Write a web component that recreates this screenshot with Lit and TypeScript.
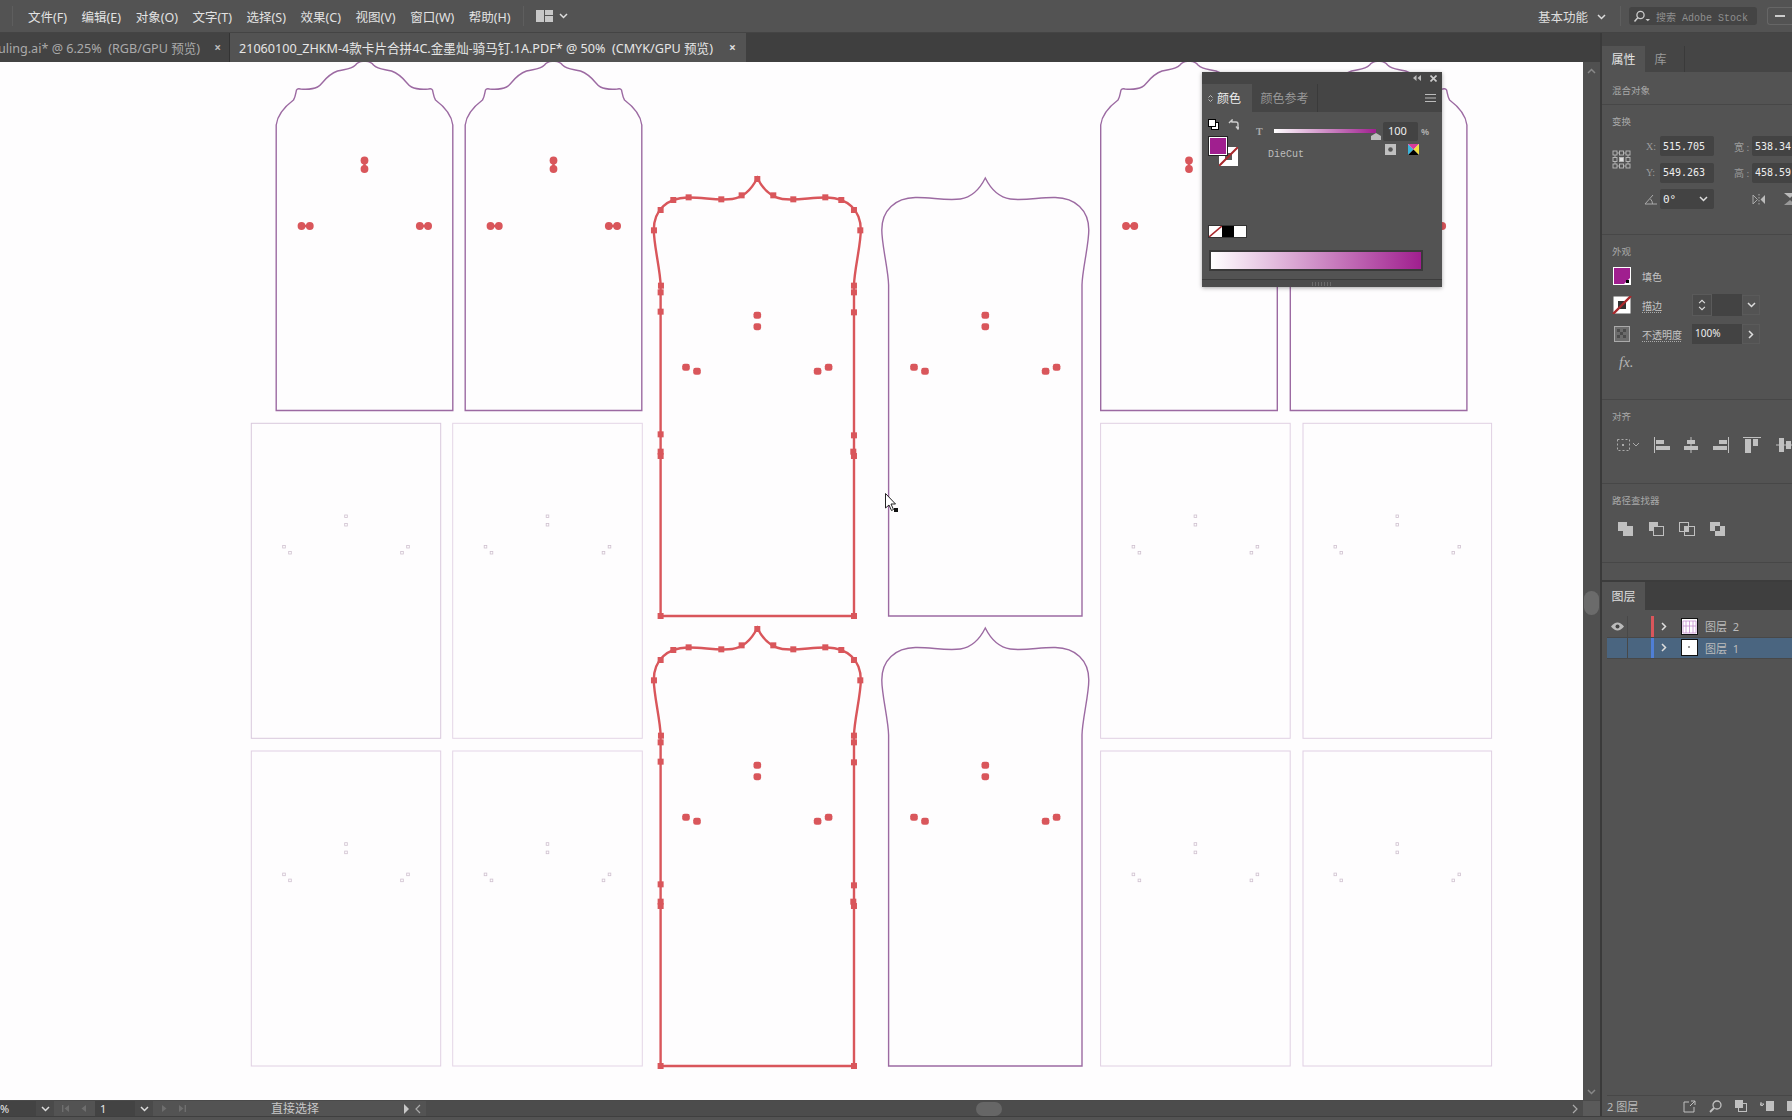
import { LitElement, html, css, svg } from "lit";
import { customElement } from "lit/decorators.js";

const RED = "#d9565b";
const PURPLE = "#9c6aa2";

const chev = (c = "#ddd") => html`<svg width="9" height="6" viewBox="0 0 9 6"><path d="M1 1l3.5 3.5L8 1" stroke=${c} fill="none" stroke-width="1.5"/></svg>`;

const domePath = "M-88.3 410.5V125C-87 114-79 106-71 100C-69 97-69 94-68 90Q-67 88-64 89C-58 89.5-52 89.5-47 87C-41 84-40 76-27 71C-20 69-14 70-9 65C-5 60 5 60 9 65C14 70 20 69 27 71C40 76 41 84 47 87C52 89.5 58 89.5 64 89Q67 88 68 90C69 94 69 97 71 100C79 106 87 114 88.3 125V410.5Z";
const flarePath = "M-96.7 616V285C-97 270-103.5 245-103.5 230C-103.5 210-90 198-70 197.5C-55 197-40 201-25 199C-15 197.5-6 190 0 178C6 190 15 197.5 25 199C40 201 55 197 70 197.5C90 198 103.5 210 103.5 230C103.5 245 97 270 96.7 285V616Z";

const domeHoles: [number, number][] = [[0, 160.5], [0, 169], [-63, 226], [-54.7, 226], [55.3, 226], [63.6, 226]];
const dome = (cx: number) => svg`<g transform="translate(${cx} 0)">
  <path d=${domePath} fill="none" stroke=${PURPLE} stroke-width="1.4"/>
  ${domeHoles.map(([x, y]) => svg`<circle cx=${x} cy=${y} r="3.9" fill=${RED}/>`)}
  <path d="M0 160.500V169M-63 226H-54.700M55.300 226H63.600" stroke=${RED} stroke-width="2.500"/>
</g>`;

const flareHoles: [number, number][] = [[0, 155.3], [0, 166.7], [-71.3, 207.3], [-60.3, 211.3], [60.3, 211.3], [71.3, 207.3]];
const flareNodes: [number, number][] = [
  [352, 57], [305, 106], [244, 118], [146, 112], [100, 120], [62, 150], [42, 211], [63, 377], [62, 397], [62, 455], [62, 823], [62, 875], [62, 888],
  [400, 106], [460, 118], [556, 112], [604, 120], [642, 150], [661, 211], [642, 377], [642, 397], [642, 457], [642, 826], [640, 875], [642, 888],
];

const flare = (cx: number, dy: number, selected: boolean) => svg`<g transform="translate(${cx} ${dy})">
  <path d=${flarePath} fill="none" stroke=${selected ? RED : PURPLE} stroke-width=${selected ? 2.4 : 1.4}/>
  ${flareHoles.map(([x, y]) => svg`<rect x=${x - 3.8} y=${y + 160 - 3.5} width="7.600" height="7" rx="2.400" fill=${RED}/>`)}
  ${selected
    ? svg`${flareNodes.map(([x, y]) => svg`<rect x=${(x - 352) / 3 - 3} y=${160 + y / 3 - 3} width="6" height="6" fill=${RED}/>`)}
      <rect x="-99.700" y="613" width="6" height="6" fill=${RED}/><rect x="93.700" y="613" width="6" height="6" fill=${RED}/>`
    : null}
</g>`;

const sheet = (x: number, y: number, w: number, c: string) => {
  const m = x + w / 2;
  const t = y - 423.3;
  const pts: [number, number][] = [[m, 516.3 + t], [m, 524.7 + t], [m - 62, 546.7 + t], [m - 56, 552.7 + t], [m + 56, 552.7 + t], [m + 62, 546.7 + t]];
  return svg`<rect x=${x} y=${y} width=${w} height="315" fill="none" stroke=${c} stroke-width="1"/>
    ${pts.map(([a, b]) => svg`<rect x=${a - 1.3} y=${b - 1.3} width="2.600" height="2.600" fill="none" stroke="#cfc0cf" stroke-width=".8"/>`)}`;
};

const menus = ["文件(F)", "编辑(E)", "对象(O)", "文字(T)", "选择(S)", "效果(C)", "视图(V)", "窗口(W)", "帮助(H)"];

@customElement("app-root")
export class AppRoot extends LitElement {
  static styles = css`
    :host { display: block; width: 1792px; height: 1120px; overflow: hidden; background: #535353; color: #d0d0d0;
      font-family: "Noto Sans", "Noto Sans CJK SC", sans-serif; font-size: 11px; }
    svg { display: block; flex: none; }
    .menubar { height: 33px; box-sizing: border-box; display: flex; align-items: center; background: #535353; border-bottom: 1px solid #444; position: relative; }
    .sep { width: 1px; height: 20px; background: #5e5e5e; flex: none; }
    .sep.first { margin-left: 12px; }
    .menus { display: flex; gap: 14.6px; margin-left: 15px; width: 495px; flex: none; }
    .menus span { font-size: 12.5px; color: #e2e2e2; flex: none; white-space: nowrap; }
    .layout-ico { margin-left: 12px; display: flex; align-items: center; gap: 6px; }
    .menu-space { flex: 1; }
    .workspace { font-size: 12.5px; color: #dedede; white-space: nowrap; }
    .wchev { margin: 2px 14px 0 9px; }
    .search { width: 128px; height: 18px; margin: 0 10px 0 8px; background: #444; border-radius: 3px; display: flex; align-items: center; padding-left: 4px; box-sizing: border-box; gap: 5px;
      font-family: "Liberation Mono", "Noto Sans CJK SC", monospace; font-size: 10px; color: #8f8f8f; white-space: nowrap; flex: none; }
    .minbtn { width: 25px; height: 18px; border: 1px solid #666; border-right: 0; border-radius: 3px 0 0 3px; box-sizing: border-box; flex: none; display: flex; align-items: center; justify-content: center; }
    .minbtn i { width: 10px; height: 2px; background: #ccc; }

    .body { display: flex; height: 1083px; }
    .left { width: 1600px; flex: none; display: flex; flex-direction: column; }
    .divider { width: 2px; background: #3a3a3a; flex: none; }
    .right { width: 190px; flex: none; display: flex; flex-direction: column; overflow: hidden; }

    .tabs { height: 29px; display: flex; background: #3f3f3f; flex: none; font-size: 12.6px; }
    .tab { display: flex; align-items: center; white-space: pre; position: relative; box-sizing: border-box; flex: none; overflow: hidden; }
    .tab.off { width: 230px; color: #aaa; justify-content: flex-end; padding-right: 8px; background: #434343; border-right: 1px solid #333; }
    .tab.on { width: 516px; background: #535353; color: #e6e6e6; padding-left: 9px; }
    .tab b { font-weight: 700; font-size: 12px; color: #ddd; }
    .tab.off b { margin-left: 14px; color: #bbb; }
    .tab.on b { margin-left: 16px; }

    .work { flex: 1; display: flex; min-height: 0; }
    .canvas { width: 1583px; flex: none; position: relative; overflow: hidden; background: #fefdfe; }
    .vscroll { width: 17px; flex: none; background: #505050; display: flex; flex-direction: column; align-items: center; }
    .vscroll .up { margin-top: 6px; transform: rotate(180deg); }
    .vscroll .thumb { width: 15px; height: 24px; border-radius: 8px; background: #6b6b6b; margin-top: 517px; }
    .vscroll .down { margin-top: auto; margin-bottom: 5px; }

    .status { height: 16px; flex: none; display: flex; align-items: center; background: #535353; border-top: 1px solid #4a4a4a; box-sizing: border-box; color: #bbb; }
    .field { background: #434343; height: 15px; display: flex; align-items: center; color: #e8e8e8; box-sizing: border-box; flex: none; font-size: 11px; }
    .sbox { width: 18px; height: 15px; background: #4a4a4a; display: flex; align-items: center; justify-content: center; flex: none; }
    .snav { width: 41px; flex: none; display: flex; justify-content: center; }
    .stool { width: 207px; flex: none; text-align: center; font-size: 12px; padding-right: 5px; box-sizing: border-box; color: #c8c8c8; line-height: 15px; white-space: nowrap; }
    .strack { flex: 1; display: flex; align-items: center; background: #4c4c4c; height: 15px; }
    .sthumb { width: 26px; height: 14px; border-radius: 7px; background: #666; margin-left: 550px; }
    .strack .rt { margin-left: auto; margin-right: 5px; }
    .scorner { width: 17px; height: 15px; background: #5a5a5a; flex: none; }

    .dock-strip { height: 13px; background: #454545; flex: none; }
    .ptabs { height: 26px; flex: none; background: #454545; display: flex; font-size: 12px; }
    .ptabs span { display: flex; align-items: center; justify-content: center; flex: none; }
    .ptabs .a { width: 43px; background: #535353; color: #e4e4e4; }
    .ptabs .b { width: 40px; color: #9a9a9a; border-right: 1px solid #3a3a3a; box-sizing: border-box; padding-right: 8px; }
    .sec { border-bottom: 1px solid #474747; padding-left: 10px; box-sizing: border-box; flex: none; }
    .ttl { font-size: 9.5px; line-height: 12px; color: #a9a9a9; white-space: nowrap; }
    .s-blend { height: 33px; padding-top: 13px; }
    .s-trans { height: 130px; padding-top: 11px; }
    .s-look { height: 165px; padding-top: 11px; }
    .s-align { height: 84px; padding-top: 11px; }
    .s-path { height: 79px; padding-top: 11px; }
    .s-gap { height: 17px; border-bottom: 2px solid #3c3c3c; flex: none; }
    .tgrid { display: grid; grid-template-columns: 20px 28px 54px 38px 70px; grid-template-rows: 20px 20px 20px; row-gap: 6.5px; margin-top: 8px; align-items: center; }
    .loc { grid-row: 1 / span 2; }
    .lab { color: #9c9c9c; font-size: 10px; padding-left: 14px; font-family: "Liberation Serif", "Noto Sans CJK SC", serif; white-space: nowrap; }
    .lab.cj { padding-left: 20px; font-size: 10px; }
    .num { height: 20px; background: #434343; border-radius: 2px; box-sizing: border-box; padding: 0 0 0 3px; display: flex; align-items: center; font-family: "DejaVu Sans Mono", monospace; font-size: 10px; color: #eee; white-space: nowrap; }
    .angle { grid-column: 3; display: flex; justify-content: space-between; align-items: center; padding-right: 6px; font-size: 11px; }
    .flips { grid-column: 5; display: flex; gap: 17px; align-items: center; }
    .lrow { display: flex; align-items: center; margin-top: 9px; }
    .lrow .cn { width: 50px; flex: none; color: #c4c4c4; font-size: 10px; white-space: nowrap; }
    .swat { width: 20px; flex: none; margin-right: 10px; }
    .under { text-decoration: underline dotted #aaa; text-underline-offset: 2px; }
    .spin { width: 20px; height: 22px; background: #4a4a4a; border: 1px solid #5a5a5a; box-sizing: border-box; display: flex; flex-direction: column; align-items: center; justify-content: center; gap: 2px; flex: none; }
    .blank { width: 30px; height: 22px; background: #434343; flex: none; }
    .box18 { width: 18px; height: 20px; border: 1px solid #5a5a5a; box-sizing: border-box; display: flex; align-items: center; justify-content: center; flex: none; }
    .pct { width: 50px; height: 20px; background: #434343; padding: 0 0 3px 3px; box-sizing: border-box; display: flex; align-items: center; color: #eee; font-size: 10px; flex: none; }
    .fx { font-family: "Liberation Serif", serif; font-style: italic; font-size: 15px; color: #b5b5b5; margin: 8px 0 0 7px; line-height: 20px; }
    .aligns { display: flex; align-items: center; margin: 14px 0 0 4px; gap: 14.5px; }
    .paths { display: flex; align-items: center; margin: 15px 0 0 6px; gap: 15px; }

    .ltabs { height: 28px; margin-top: 0; background: #3f3f3f; flex: none; display: flex; }
    .ltabs span { width: 43px; background: #535353; display: flex; align-items: center; justify-content: center; font-size: 12px; color: #ddd; }
    .layers { flex: 1; padding-top: 6px; min-height: 0; border-bottom: 1px solid #474747; margin-left: 5px; box-sizing: border-box; }
    .lay { height: 21.5px; display: flex; align-items: center; border-bottom: 1px solid #484848; box-sizing: border-box; }
    .lay.sel { background: #4a6580; }
    .lay .eye { width: 21px; height: 100%; border-right: 1px solid #484848; box-sizing: border-box; display: flex; align-items: center; justify-content: center; flex: none; }
    .lay .bar { width: 3px; height: 100%; margin-left: 23px; flex: none; }
    .lay .arr { margin-left: 7px; flex: none; }
    .lay .th { width: 17px; height: 17px; background: #fff; border: 1px solid #111; box-sizing: border-box; margin-left: 14px; flex: none; display: flex; align-items: center; justify-content: center; }
    .lay .nm { margin-left: 7px; font-size: 11px; color: #bcbcbc; white-space: pre; }
    .pfoot { height: 20px; flex: none; display: flex; align-items: center; padding-left: 5px; font-size: 11px; color: #bbb; gap: 0; }
    .pfoot .cnt { width: 76px; flex: none; white-space: nowrap; }
    .pfoot .ic { display: flex; gap: 13px; align-items: center; }
    .bottom { height: 4px; background: #535353; border-top: 1px solid #3f3f3f; box-sizing: border-box; }

    .cp { position: absolute; left: 1202px; top: 10px; width: 240px; height: 215px; background: #535353; box-shadow: 0 1px 4px rgba(0,0,0,.35); display: flex; flex-direction: column; }
    .cp-title { height: 12px; background: #454545; flex: none; display: flex; justify-content: flex-end; align-items: center; gap: 9px; padding-right: 5px; }
    .cp-tabs { height: 28px; flex: none; background: #454545; display: flex; font-size: 12px; }
    .cp-t1 { width: 50px; background: #535353; color: #eee; display: flex; align-items: center; gap: 4px; padding-left: 6px; box-sizing: border-box; }
    .cp-t2 { width: 66px; color: #999; border-right: 1px solid #3a3a3a; display: flex; align-items: center; justify-content: center; box-sizing: border-box; }
    .cp-menu { margin: 0 6px 0 auto; align-self: center; }
    .cp-main { flex: 1; display: flex; padding: 7px 0 0 6px; min-height: 0; }
    .cp-left { width: 51px; flex: none; }
    .stack { position: relative; width: 30px; height: 29px; margin: 7px 0 0 1px; }
    .fill { position: absolute; left: 0; top: 0; width: 18px; height: 18px; background: #a01f8f; border: 1px solid #fff; outline: 1px solid #222; box-sizing: border-box; z-index: 1; }
    .stroke { position: absolute; left: 10px; top: 10px; }
    .cp-row { display: flex; align-items: center; height: 20px; margin-top: 2px; }
    .cp-t { width: 15px; flex: none; font-family: "Liberation Serif", serif; font-size: 10px; color: #aaa; font-weight: 700; margin-left: -3px; padding-right: 3px; }
    .slider { position: relative; width: 102px; height: 4px; flex: none; background: linear-gradient(90deg, #fff, #a01f8f); margin-right: 7px; }
    .handle { position: absolute; right: -5px; top: 4px; }
    .cp-in { width: 35px; height: 19px; background: #434343; border-radius: 2px; flex: none; box-sizing: border-box; padding: 0 0 2px 5px; display: flex; align-items: center; color: #eee; font-size: 11px; }
    .cp-pct { margin-left: 3px; font-size: 9px; color: #aaa; font-weight: 700; }
    .cp-row2 { display: flex; align-items: flex-start; margin-top: 3px; }
    .diecut { font-family: "Liberation Mono", monospace; font-size: 10px; color: #bdbdbd; margin: 5px 0 0 9px; width: 117px; flex: none; }
    .cp-ic { display: flex; gap: 12px; }
    .cp-sw { display: flex; flex: none; margin: 0 0 0 6px; width: 39px; border: 1px solid #333; box-sizing: border-box; height: 13px; }
    .cp-sw i { flex: 1; display: block; }
    .grad { flex: none; height: 21px; margin: 12px 0 0 7px; width: 214px; box-sizing: border-box; border: 2px solid #3a3a3a; background: linear-gradient(90deg, #fff, #a01f8f); }
    .grip { flex: none; height: 7px; margin-top: 8px; background: #4c4c4c; border-top: 1px solid #3c3c3c; display: flex; align-items: center; justify-content: center; }
    .grip i { width: 20px; height: 4px; background: repeating-linear-gradient(90deg, #6a6a6a 0 1px, transparent 1px 3px); }
  `;

  render() {
    return html`
      <div class="menubar">
        <div class="sep first"></div>
        <div class="menus">${menus.map((m) => html`<span>${m}</span>`)}</div>
        <div class="sep"></div>
        <div class="layout-ico">
          <svg width="17" height="12" viewBox="0 0 17 12"><path d="M0 0h8v12H0zM9 0h8v5H9zM9 6h8v6H9z" fill="#c8c8c8"/></svg>
          ${chev()}
        </div>
        <div class="menu-space"></div>
        <span class="workspace">基本功能</span>
        <span class="wchev">${chev()}</span>
        <div class="sep"></div>
        <div class="search">
          <svg width="18" height="13" viewBox="0 0 18 13"><circle cx="7.500" cy="5" r="3.600" fill="none" stroke="#ccc" stroke-width="1.300"/><path d="M5 7.500L1.500 11.500" stroke="#ccc" stroke-width="1.500"/><path d="M12.500 9h4.500l-2.200 2.200z" fill="#ccc"/></svg>
          <span>搜索 Adobe Stock</span>
        </div>
        <div class="minbtn"><i></i></div>
      </div>

      <div class="body">
        <div class="left">
          <div class="tabs">
            <div class="tab off"><span>uling.ai* @ 6.25%  (RGB/GPU 预览)</span><b>×</b></div>
            <div class="tab on"><span>21060100_ZHKM-4款卡片合拼4C.金墨灿-骑马钉.1A.PDF* @ 50%  (CMYK/GPU 预览)</span><b>×</b></div>
          </div>
          <div class="work">
            <div class="canvas">
              ${this.artwork()}
              ${this.colorPanel()}
            </div>
            <div class="vscroll">
              <span class="up">${chev("#888")}</span>
              <div class="thumb"></div>
              <span class="down">${chev("#888")}</span>
            </div>
          </div>
          ${this.statusBar()}
        </div>
        <div class="divider"></div>
        <div class="right">${this.rightPanels()}</div>
      </div>
      <div class="bottom"></div>
    `;
  }

  artwork() {
    return html`<svg width="1583" height="1038" viewBox="0 62 1583 1038">
      ${dome(364.5)}${dome(553.5)}${dome(1189)}${dome(1378.6)}
      ${flare(757.3, 0, true)}${flare(757.3, 450, true)}
      ${flare(985.3, 0, false)}${flare(985.3, 450, false)}
      ${sheet(251.3, 423.3, 189.4, "#d9c8dd")}${sheet(452.7, 423.3, 189.6, "#e4d5e7")}
      ${sheet(251.3, 751, 189.4, "#e0d0e3")}${sheet(452.7, 751, 189.6, "#e4d5e7")}
      ${sheet(1100.6, 423.3, 189.6, "#e0d0e3")}${sheet(1303, 423.3, 188.6, "#e0d0e3")}
      ${sheet(1100.6, 751, 189.6, "#e0d0e3")}${sheet(1303, 751, 188.6, "#e0d0e3")}
      <path d="M885.500 493.500V508l3.500-3 2.500 5.500 2-1-2.500-5.500h4.500z" fill="#fff" stroke="#222" stroke-width="1"/>
      <rect x="894" y="508" width="4" height="4" fill="#111"/>
    </svg>`;
  }

  colorPanel() {
    return html`<div class="cp">
      <div class="cp-title">
        <svg width="8" height="6" viewBox="0 0 8 6"><path d="M3.500 0v6L0 3zM8 0v6L4.500 3z" fill="#bbb"/></svg>
        <svg width="7" height="7" viewBox="0 0 7 7"><path d="M.5.5l6 6M6.500.5l-6 6" stroke="#ccc" stroke-width="1.600"/></svg>
      </div>
      <div class="cp-tabs">
        <div class="cp-t1">
          <svg width="5" height="9" viewBox="0 0 5 9"><path d="M.5 3.500l2-2 2 2M.5 5.500l2 2 2-2" fill="none" stroke="#bbb"/></svg>
          <span>颜色</span>
        </div>
        <div class="cp-t2">颜色参考</div>
        <svg class="cp-menu" width="11" height="8" viewBox="0 0 11 8"><path d="M0 .5h11M0 4h11M0 7.500h11" stroke="#bbb"/></svg>
      </div>
      <div class="cp-main">
        <div class="cp-left">
          <div style="display:flex;gap:9px;align-items:center">
            <svg width="11" height="11" viewBox="0 0 11 11"><rect x="3.500" y="3.500" width="7" height="7" fill="#fff" stroke="#000"/><rect x=".5" y=".5" width="7" height="7" fill="#fff" stroke="#000"/></svg>
            <svg width="11" height="11" viewBox="0 0 11 11"><path d="M1 4l3-3v2h4q2 0 2 2v4M8 7.500l2 2.500 1-2" fill="none" stroke="#ccc" stroke-width="1.400"/></svg>
          </div>
          <div class="stack">
            <div class="fill"></div>
            <svg class="stroke" width="19" height="19" viewBox="0 0 19 19"><rect width="19" height="19" fill="#fff"/><rect x="6" y="6" width="7" height="7" fill="#5b5b5b"/><path d="M0 19L19 0" stroke="#a8282c" stroke-width="2"/></svg>
          </div>
        </div>
        <div>
          <div class="cp-row">
            <span class="cp-t">T</span>
            <div class="slider">
              <svg class="handle" width="10" height="7" viewBox="0 0 10 7"><path d="M5 0l5 3v4H0V3z" fill="#bdbdbd"/></svg>
            </div>
            <div class="cp-in">100</div>
            <span class="cp-pct">%</span>
          </div>
          <div class="cp-row2">
            <span class="diecut">DieCut</span>
            <div class="cp-ic">
              <svg width="11" height="11" viewBox="0 0 11 11"><rect width="11" height="11" fill="#c0c0c0"/><circle cx="5.500" cy="5.500" r="2.300" fill="#555"/></svg>
              <svg width="11" height="11" viewBox="0 0 11 11"><rect width="11" height="11" fill="#eee"/><path d="M0 0l5.500 5.500L0 11z" fill="#3ab4dc"/><path d="M0 0h11L5.500 5.500z" fill="#d83a9a"/><path d="M11 0v11L5.500 5.500z" fill="#f2df3c"/><path d="M0 11h11L5.500 5.500z" fill="#000"/></svg>
            </div>
          </div>
        </div>
      </div>
      <div class="cp-sw">
        <svg width="13" height="11" viewBox="0 0 13 11"><rect width="13" height="11" fill="#fff"/><path d="M0 11L13 0" stroke="#a8282c" stroke-width="1.600"/></svg>
        <i style="background:#000"></i><i style="background:#fff"></i>
      </div>
      <div class="grad"></div>
      <div class="grip"><i></i></div>
    </div>`;
  }

  statusBar() {
    const nav = (d: string) => html`<svg width="9" height="9" viewBox="0 0 9 9"><path d=${d} fill="#6e6e6e"/></svg>`;
    return html`<div class="status">
      <div class="field" style="width:36px">%</div>
      <div class="sbox">${chev()}</div>
      <div class="snav" style="gap:9px">${nav("M1 1h1.400v7H1zM8 1v7L3.500 4.500z")}${nav("M7 1v7L2.500 4.500z")}</div>
      <div class="field" style="width:40px;padding-left:5px">1</div>
      <div class="sbox">${chev()}</div>
      <div class="snav" style="gap:9px">${nav("M2 1v7l4.500-3.500z")}${nav("M1 1v7l4.500-3.500zM6.600 1H8v7H6.600z")}</div>
      <div class="stool">直接选择</div>
      <svg width="7" height="10" viewBox="0 0 7 10" style="margin-left:2px"><path d="M1 0v10l5-5z" fill="#c8c8c8"/></svg>
      <svg width="16" height="10" viewBox="0 0 16 10"><path d="M10 1L6 5l4 4" fill="none" stroke="#aaa" stroke-width="1.200"/></svg>
      <div class="strack">
        <div class="sthumb"></div>
        <svg class="rt" width="6" height="10" viewBox="0 0 6 10"><path d="M1 1l4 4-4 4" fill="none" stroke="#aaa" stroke-width="1.200"/></svg>
      </div>
      <div class="scorner"></div>
    </div>`;
  }

  rightPanels() {
    const g = "#c0c0c0";
    return html`
      <div class="dock-strip"></div>
      <div class="ptabs"><span class="a">属性</span><span class="b">库</span></div>
      <div class="sec s-blend"><div class="ttl">混合对象</div></div>

      <div class="sec s-trans">
        <div class="ttl">变换</div>
        <div class="tgrid">
          <svg class="loc" width="19" height="19" viewBox="0 0 19 19">
            ${[1, 7.5, 14].flatMap((y) => [1, 7.5, 14].map((x) => svg`<rect x=${x} y=${y} width="4" height="4" fill=${x === 7.5 && y === 7.5 ? "#ddd" : "none"} stroke="#bbb" stroke-width=".9"/>`))}
            <path d="M5 3h2.500M11.500 3H14M5 16h2.500M11.500 16H14M3 5v2.500M3 11.500V14M16 5v2.500M16 11.500V14" stroke="#bbb" stroke-width=".8"/>
          </svg>
          <span class="lab">X:</span><div class="num">515.705</div><span class="lab cj">宽 :</span><div class="num">538.34</div>
          <span class="lab">Y:</span><div class="num">549.263</div><span class="lab cj">高 :</span><div class="num">458.59</div>
          <svg style="grid-column:2;justify-self:end;margin-right:1px" width="15" height="11" viewBox="0 0 15 11"><path d="M1 10h12M1 10L9 1M6.500 5q2 2 2 5" fill="none" stroke="#aaa"/></svg>
          <div class="num angle"><span>0°</span>${chev()}</div>
          <div class="flips">
            <svg width="14" height="11" viewBox="0 0 14 11"><path d="M1 1v9l4.500-4.500z" fill="none" stroke="#aaa"/><path d="M13 1v9L8.500 5.500z" fill="#bbb"/><path d="M7 0v11" stroke="#aaa" stroke-dasharray="1.500 1.500"/></svg>
            <svg width="14" height="14" viewBox="0 0 14 14"><path d="M1 1h12L7 6z" fill="#bbb"/><path d="M1 13h12L7 8z" fill="#999"/></svg>
          </div>
        </div>
      </div>

      <div class="sec s-look">
        <div class="ttl">外观</div>
        <div class="lrow" style="height:18px">
          <svg class="swat" width="18" height="18" viewBox="0 0 18 18"><rect x=".5" y=".5" width="17" height="17" fill="#a01f8f" stroke="#fff"/><path d="M17 11v6h-6z" fill="#fff"/><rect x="13" y="13" width="3" height="3" fill="#000"/></svg>
          <span class="cn">填色</span>
        </div>
        <div class="lrow" style="height:22px">
          <svg class="swat" width="18" height="18" viewBox="0 0 18 18"><rect x=".5" y=".5" width="17" height="17" fill="#fff"/><rect x="5" y="5" width="8" height="8" fill="#333"/><path d="M0 18L18 0" stroke="#a8282c" stroke-width="2.400"/></svg>
          <span class="cn"><span class="under">描边</span></span>
          <div class="spin">
            <svg width="8" height="5" viewBox="0 0 9 6" style="transform:rotate(180deg)"><path d="M1 1l3.500 3.500L8 1" stroke="#ddd" fill="none" stroke-width="1.300"/></svg>
            <svg width="8" height="5" viewBox="0 0 9 6"><path d="M1 1l3.500 3.500L8 1" stroke="#ddd" fill="none" stroke-width="1.300"/></svg>
          </div>
          <div class="blank"></div>
          <div class="box18">${chev()}</div>
        </div>
        <div class="lrow" style="margin-top:8px;height:20px">
          <svg class="swat" width="16" height="16" viewBox="0 0 16 16"><rect x=".5" y=".5" width="15" height="15" fill="#6c6c6c" stroke="#aaa"/><path d="M3 3h3v3H3zM9 3h3v3H9zM6 6h3v3H6zM3 9h3v3H3zM9 9h3v3H9z" fill="#4c4c4c"/></svg>
          <span class="cn"><span class="under">不透明度</span></span>
          <div class="pct">100%</div>
          <div class="box18"><svg width="6" height="9" viewBox="0 0 6 9"><path d="M1 1l3.500 3.500L1 8" stroke="#ddd" fill="none" stroke-width="1.500"/></svg></div>
        </div>
        <div class="fx">fx.</div>
      </div>

      <div class="sec s-align">
        <div class="ttl">对齐</div>
        <div class="aligns">
          <svg style="margin-right:-1px" width="24" height="14" viewBox="0 0 24 14"><rect x="1.500" y="1.500" width="12" height="11" fill="none" stroke="#aaa" stroke-dasharray="2 2"/><rect x="6" y="6" width="2" height="2" fill="#aaa"/><path d="M17 5l3 3 3-3" fill="none" stroke="#aaa"/></svg>
          <svg width="16" height="16" viewBox="0 0 16 16"><path d="M.5 0v16" stroke=${g}/><path d="M2 3h8v4H2zM2 9h14v4H2z" fill=${g}/></svg>
          <svg width="14" height="16" viewBox="0 0 14 16"><path d="M7 0v16" stroke=${g}/><path d="M3 3h8v4H3zM0 9h14v4H0z" fill=${g}/></svg>
          <svg width="16" height="16" viewBox="0 0 16 16"><path d="M15.500 0v16" stroke=${g}/><path d="M6 3h8v4H6zM0 9h14v4H0z" fill=${g}/></svg>
          <svg width="18" height="16" viewBox="0 0 18 16"><path d="M0 .5h18" stroke=${g}/><path d="M2 2h6v14H2zM10 2h5v7h-5z" fill=${g}/></svg>
          <svg width="18" height="14" viewBox="0 0 18 14"><path d="M0 7h18" stroke=${g}/><path d="M3 0h5v14H3zM10 3h5v8h-5z" fill=${g}/></svg>
        </div>
      </div>

      <div class="sec s-path">
        <div class="ttl">路径查找器</div>
        <div class="paths">
          <svg width="15" height="14" viewBox="0 0 15 14"><path d="M0 0h9v4h6v10H5V9H0z" fill=${g}/></svg>
          <svg width="16" height="14" viewBox="0 0 16 14"><path d="M1 0h9v4H5v5H1z" fill=${g}/><rect x="5.500" y="4.500" width="10" height="9" fill="none" stroke=${g}/></svg>
          <svg width="16" height="14" viewBox="0 0 16 14"><rect x=".5" y=".5" width="9" height="9" fill="none" stroke=${g}/><rect x="5.500" y="4.500" width="10" height="9" fill="none" stroke=${g}/><rect x="5" y="4" width="5" height="6" fill=${g}/></svg>
          <svg width="15" height="14" viewBox="0 0 15 14"><path d="M0 0h10v4H5v5H0zM10 4h5v10H5V9h5z" fill=${g}/></svg>
        </div>
      </div>
      <div class="s-gap"></div>

      <div class="ltabs"><span>图层</span></div>
      <div class="layers">
        <div class="lay">
          <div class="eye"><svg width="13" height="9" viewBox="0 0 13 9"><path d="M0 4.500Q6.500-3.500 13 4.500Q6.500 12.500 0 4.500z" fill="#bbb"/><circle cx="6.500" cy="4.500" r="2" fill="#444"/></svg></div>
          <div class="bar" style="background:#d9565b"></div>
          <svg class="arr" width="6" height="9" viewBox="0 0 6 9"><path d="M1 1l3.500 3.500L1 8" stroke="#ddd" fill="none" stroke-width="1.500"/></svg>
          <div class="th"><svg width="15" height="15" viewBox="0 0 15 15"><path d="M1 2v12M4 2v12M7.500 2v12M11 2v12M14 2v12M1 2h13M1 7h13M1 14h13" stroke="#c78fd0" stroke-width=".8"/></svg></div>
          <span class="nm">图层  2</span>
        </div>
        <div class="lay sel">
          <div class="eye"></div>
          <div class="bar" style="background:#4f7fd6"></div>
          <svg class="arr" width="6" height="9" viewBox="0 0 6 9"><path d="M1 1l3.500 3.500L1 8" stroke="#ddd" fill="none" stroke-width="1.500"/></svg>
          <div class="th"><svg width="3" height="3" viewBox="0 0 3 3"><rect width="2" height="2" fill="#999"/></svg></div>
          <span class="nm">图层  1</span>
        </div>
      </div>
      <div class="pfoot">
        <span class="cnt">2 图层</span>
        <div class="ic">
          <svg width="13" height="13" viewBox="0 0 13 13"><path d="M6 2H1v10h10V7M7 6l5-5M8 1h4v4" fill="none" stroke=${g}/></svg>
          <svg width="13" height="13" viewBox="0 0 13 13"><circle cx="8" cy="5" r="4" fill="none" stroke=${g} stroke-width="1.300"/><path d="M5 8l-4 4" stroke=${g} stroke-width="1.800"/></svg>
          <svg width="12" height="12" viewBox="0 0 12 12"><rect x="3.500" y="3.500" width="8" height="8" fill="none" stroke=${g}/><rect x="0" y="0" width="8" height="8" fill=${g}/></svg>
          <svg width="14" height="10" viewBox="0 0 14 10"><path d="M6 0h8v10H6z" fill=${g}/><path d="M0 3h4l-2 2zM1 1v4" stroke=${g} fill="none"/></svg>
          <svg width="10" height="10" viewBox="0 0 10 10"><rect width="10" height="10" fill=${g}/></svg>
        </div>
      </div>
    `;
  }
}
